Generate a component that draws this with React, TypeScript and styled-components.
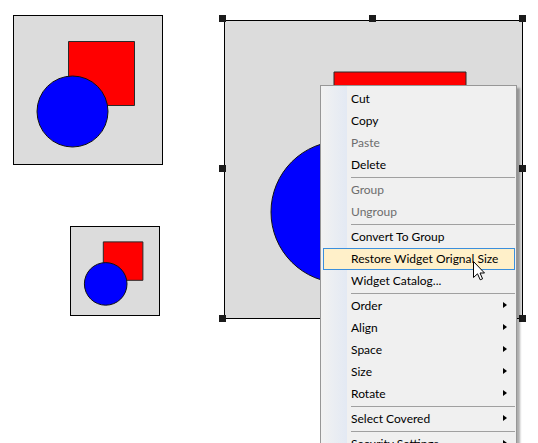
import React from 'react';
import styled, { createGlobalStyle } from 'styled-components';

const GlobalStyle = createGlobalStyle`
  html, body {
    margin: 0;
    padding: 0;
    background: #ffffff;
    overflow: hidden;
  }
  * {
    box-sizing: border-box;
  }
`;

const Canvas = styled.div`
  position: relative;
  width: 538px;
  height: 443px;
  overflow: hidden;
  background: #ffffff;
  font-family: Lato, 'Open Sans', 'Noto Sans', sans-serif;
`;

// widgets sit on a free design canvas, so their place is part of the content
const WidgetFrame = styled.div<{ $x: number; $y: number; $size: number }>`
  position: absolute;
  left: ${(p) => p.$x}px;
  top: ${(p) => p.$y}px;
  width: ${(p) => p.$size}px;
  height: ${(p) => p.$size}px;
`;

const WidgetArt = styled.svg`
  display: block;
  width: 100%;
  height: 100%;
`;

const Handle = styled.div<{ $h: number; $v: number }>`
  position: absolute;
  width: 7px;
  height: 7px;
  background: #1b1b1b;
  left: calc(${(p) => p.$h * 100}% - 4px);
  top: calc(${(p) => p.$v * 100}% - 4px);
`;

const Menu = styled.ul`
  position: absolute;
  left: 320px;
  top: 85px;
  width: 197px;
  margin: 0;
  padding: 2px 1px 2px 2px;
  list-style: none;
  display: flex;
  flex-direction: column;
  border: 1px solid #979797;
  background: linear-gradient(
    to right,
    #f2f2f2 0px,
    #e3e9f3 26px,
    #f0f0f0 26px
  );
  box-shadow: 3px 3px 2px rgba(0, 0, 0, 0.32);
`;

const Item = styled.li<{ $disabled?: boolean; $active?: boolean }>`
  display: flex;
  align-items: center;
  flex: 0 0 22px;
  padding: 0 0 2px 27px;
  font-size: 12px;
  font-weight: 400;
  color: ${(p) => (p.$disabled ? '#6d6d6d' : '#000000')};
  border: 1px solid ${(p) => (p.$active ? '#3b8fdc' : 'transparent')};
  background: ${(p) => (p.$active ? '#fff0c9' : 'transparent')};
  white-space: nowrap;
`;

const Label = styled.span`
  flex: 1;
`;

const Separator = styled.li`
  flex: 0 0 3px;
  margin-left: 28px;
  display: flex;
  align-items: center;

  &::after {
    content: '';
    flex: 1;
    height: 1px;
    background: #a0a0a0;
  }
`;

const SubArrow = styled.span`
  margin-right: 7px;
  width: 0;
  height: 0;
  border-top: 3.5px solid transparent;
  border-bottom: 3.5px solid transparent;
  border-left: 4px solid #000000;
`;

const Cursor = styled.svg`
  position: absolute;
  left: 473px;
  top: 261px;
  width: 13px;
  height: 20px;
`;

type Entry =
  | { label: string; disabled?: boolean; active?: boolean; sub?: boolean }
  | 'sep';

const entries: Entry[] = [
  { label: 'Cut' },
  { label: 'Copy' },
  { label: 'Paste', disabled: true },
  { label: 'Delete' },
  'sep',
  { label: 'Group', disabled: true },
  { label: 'Ungroup', disabled: true },
  'sep',
  { label: 'Convert To Group' },
  { label: 'Restore Widget Orignal Size', active: true },
  { label: 'Widget Catalog...' },
  'sep',
  { label: 'Order', sub: true },
  { label: 'Align', sub: true },
  { label: 'Space', sub: true },
  { label: 'Size', sub: true },
  { label: 'Rotate', sub: true },
  'sep',
  { label: 'Select Covered', sub: true },
  'sep',
  { label: 'Security Settings', sub: true },
];

const Widget: React.FC<{ x: number; y: number; size: number; selected?: boolean }> = ({
  x,
  y,
  size,
  selected,
}) => (
  <WidgetFrame $x={x} $y={y} $size={size}>
    <WidgetArt viewBox="0 0 150 150">
      <rect
        x={0.5}
        y={0.5}
        width={149}
        height={149}
        fill="#dcdcdc"
        stroke="#000"
        vectorEffect="non-scaling-stroke"
        shapeRendering="crispEdges"
      />
      <rect
        x={55.5}
        y={26.5}
        width={66}
        height={64}
        fill="#ff0000"
        stroke="#2a2a2a"
        vectorEffect="non-scaling-stroke"
      />
      <circle
        cx={59.5}
        cy={96.5}
        r={35.5}
        fill="#0000ff"
        stroke="#111"
        vectorEffect="non-scaling-stroke"
      />
    </WidgetArt>
    {selected &&
      [0, 0.5, 1].map((v) =>
        [0, 0.5, 1]
          .filter((h) => !(h === 0.5 && v === 0.5))
          .map((h) => <Handle key={`${h}-${v}`} $h={h} $v={v} />)
      )}
  </WidgetFrame>
);

const App: React.FC = () => {
  return (
    <Canvas>
      <GlobalStyle />
      <Widget x={13} y={15} size={150} />
      <Widget x={70} y={226} size={90} />
      <Widget x={223} y={19} size={300} selected />
      <Menu>
        {entries.map((e, i) =>
          e === 'sep' ? (
            <Separator key={i} />
          ) : (
            <Item key={i} $disabled={e.disabled} $active={e.active}>
              <Label>{e.label}</Label>
              {e.sub && <SubArrow />}
            </Item>
          )
        )}
      </Menu>
      <Cursor viewBox="0 0 13 20">
        <polygon
          points="0.5,0.5 0.5,16.5 4.5,12.8 7.2,18.8 9.6,17.8 7,12 11.5,12"
          fill="#ffffff"
          stroke="#000000"
          strokeWidth={1}
        />
      </Cursor>
    </Canvas>
  );
};

export default App;
